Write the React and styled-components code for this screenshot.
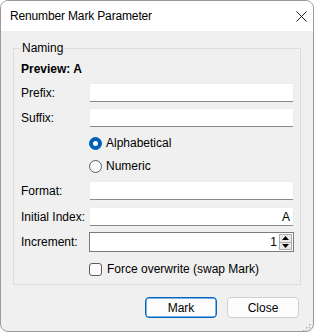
import React from 'react'
import styled, { createGlobalStyle } from 'styled-components'

const Global = createGlobalStyle`
    html, body {
        margin: 0;
        padding: 0;
        background: #ffffff;
    }
    * {
        box-sizing: border-box;
    }
`

const Window = styled.div`
    position: relative;
    display: flex;
    flex-direction: column;
    width: 314px;
    height: 332px;
    border: 1px solid #9a9a9a;
    border-radius: 8px;
    overflow: hidden;
    background: #f0f0f0;
    font-family: "Segoe UI", "Liberation Sans", Arial, sans-serif;
    font-size: 12px;
    color: #000;
`

const TitleBar = styled.div`
    display: flex;
    align-items: center;
    justify-content: space-between;
    height: 30px;
    padding: 0 5px 0 9px;
    background: #ffffff;
    font-size: 12px;
    letter-spacing: -0.15px;
`

const CloseX = styled.div`
    display: flex;
    align-items: center;
    justify-content: center;
    width: 12px;
    height: 12px;
    margin-right: 1px;
`

const Body = styled.div`
    display: flex;
    flex-direction: column;
    flex: 1;
    padding: 10px 12px 0 12px;
`

const Group = styled.fieldset`
    display: flex;
    flex-direction: column;
    margin: 0;
    padding: 0 6px 6px 7px;
    border: 1px solid #dcdcdc;
    min-width: 0;
`

const Legend = styled.legend`
    padding: 0 1px;
    line-height: 14px;
    font-size: 12px;
`

const Row = styled.div`
    display: flex;
    align-items: center;
    height: ${p => p.$h || 19}px;
    margin-top: ${p => p.$mt || 0}px;
    padding-left: ${p => p.$indent || 0}px;
`

const Preview = styled.div`
    font-weight: bold;
    line-height: 16px;
`

const Label = styled.div`
    width: 68px;
    flex-shrink: 0;
    white-space: nowrap;
`

const TextBox = styled.div`
    flex: 1;
    height: 19px;
    display: flex;
    align-items: center;
    justify-content: flex-end;
    padding-right: 3px;
    background: #ffffff;
    border: 1px solid #ececec;
    border-bottom: 1px solid #8a8a8a;
    border-radius: 2px;
`

const SpinBox = styled.div`
    flex: 1;
    height: 20px;
    display: flex;
    align-items: center;
    justify-content: flex-end;
    background: #ffffff;
    border: 1px solid #7a7a7a;
    padding: 1px;
`

const SpinValue = styled.div`
    padding-right: 2px;
`

const Spinner = styled.div`
    display: flex;
    flex-direction: column;
    width: 13px;
    height: 16px;
    border: 1px solid #acacac;
    background: #e9e9e9;
`

const SpinHalf = styled.div`
    flex: 1;
    display: flex;
    align-items: center;
    justify-content: center;
    & + & {
        border-top: 1px solid #acacac;
    }
`

const Radio = styled.span`
    width: 13px;
    height: 13px;
    border-radius: 50%;
    flex-shrink: 0;
    margin-right: 4px;
    display: flex;
    align-items: center;
    justify-content: center;
    border: 1px solid ${p => p.$on ? '#005fb8' : '#5c5c5c'};
    background: ${p => p.$on ? '#005fb8' : '#fbfbfb'};
    &::after {
        content: '';
        width: 5px;
        height: 5px;
        border-radius: 50%;
        background: #ffffff;
        display: ${p => p.$on ? 'block' : 'none'};
    }
`

const Check = styled.span`
    width: 13px;
    height: 13px;
    flex-shrink: 0;
    margin-right: 5px;
    border: 1px solid #5c5c5c;
    border-radius: 3px;
    background: #fbfbfb;
`

const Footer = styled.div`
    display: flex;
    justify-content: flex-end;
    gap: 10px;
    padding: 12px 2px 0 0;
`

const Button = styled.button`
    width: 72px;
    height: 21px;
    padding: 0;
    font-family: inherit;
    font-size: 12px;
    color: #000;
    background: #fdfdfd;
    border: 1px solid ${p => p.$primary ? '#0067c0' : '#d0d0d0'};
    border-radius: 4px;
    ${p => p.$primary ? 'box-shadow: inset 0 0 0 0.5px #0067c0;' : ''}
`

const Grip = styled.div`
    position: absolute;
    right: 2px;
    bottom: 2px;
    width: 8px;
    height: 8px;
`

const Field = ({ label, value }) => (
    <>
        <Label>{label}</Label>
        <TextBox>{value}</TextBox>
    </>
)

const App = () => {
    return (
        <Window>
            <Global/>
            <TitleBar>
                <span>Renumber Mark Parameter</span>
                <CloseX>
                    <svg width="11" height="11" viewBox="0 0 11 11">
                        <path d="M0.5 0.5 L10.5 10.5 M10.5 0.5 L0.5 10.5" stroke="#1a1a1a" strokeWidth="1"/>
                    </svg>
                </CloseX>
            </TitleBar>
            <Body>
                <Group>
                    <Legend>Naming</Legend>
                    <Row $h={16} $mt={6}><Preview>Preview: A</Preview></Row>
                    <Row $mt={6}><Field label="Prefix:"/></Row>
                    <Row $mt={6}><Field label="Suffix:"/></Row>
                    <Row $h={18} $mt={7} $indent={68}><Radio $on/>Alphabetical</Row>
                    <Row $h={18} $mt={5} $indent={68}><Radio/>Numeric</Row>
                    <Row $mt={6}><Field label="Format:"/></Row>
                    <Row $mt={7}><Field label="Initial Index:" value="A"/></Row>
                    <Row $h={20} $mt={6}>
                        <Label>Increment:</Label>
                        <SpinBox>
                            <SpinValue>1</SpinValue>
                            <Spinner>
                                <SpinHalf>
                                    <svg width="7" height="4" viewBox="0 0 7 4"><path d="M3.5 0 L7 4 L0 4 Z" fill="#000"/></svg>
                                </SpinHalf>
                                <SpinHalf>
                                    <svg width="7" height="4" viewBox="0 0 7 4"><path d="M0 0 L7 0 L3.5 4 Z" fill="#000"/></svg>
                                </SpinHalf>
                            </Spinner>
                        </SpinBox>
                    </Row>
                    <Row $h={18} $mt={8} $indent={68}><Check/>Force overwrite (swap Mark)</Row>
                </Group>
                <Footer>
                    <Button $primary>Mark</Button>
                    <Button>Close</Button>
                </Footer>
            </Body>
            <Grip>
                <svg width="8" height="8" viewBox="0 0 8 8">
                    <rect x="6" y="0" width="1.5" height="1.5" fill="#b0b0b0"/>
                    <rect x="3" y="3" width="1.5" height="1.5" fill="#b0b0b0"/>
                    <rect x="6" y="3" width="1.5" height="1.5" fill="#b0b0b0"/>
                    <rect x="0" y="6" width="1.5" height="1.5" fill="#b0b0b0"/>
                    <rect x="3" y="6" width="1.5" height="1.5" fill="#b0b0b0"/>
                    <rect x="6" y="6" width="1.5" height="1.5" fill="#b0b0b0"/>
                </svg>
            </Grip>
        </Window>
    )
}

export default App
